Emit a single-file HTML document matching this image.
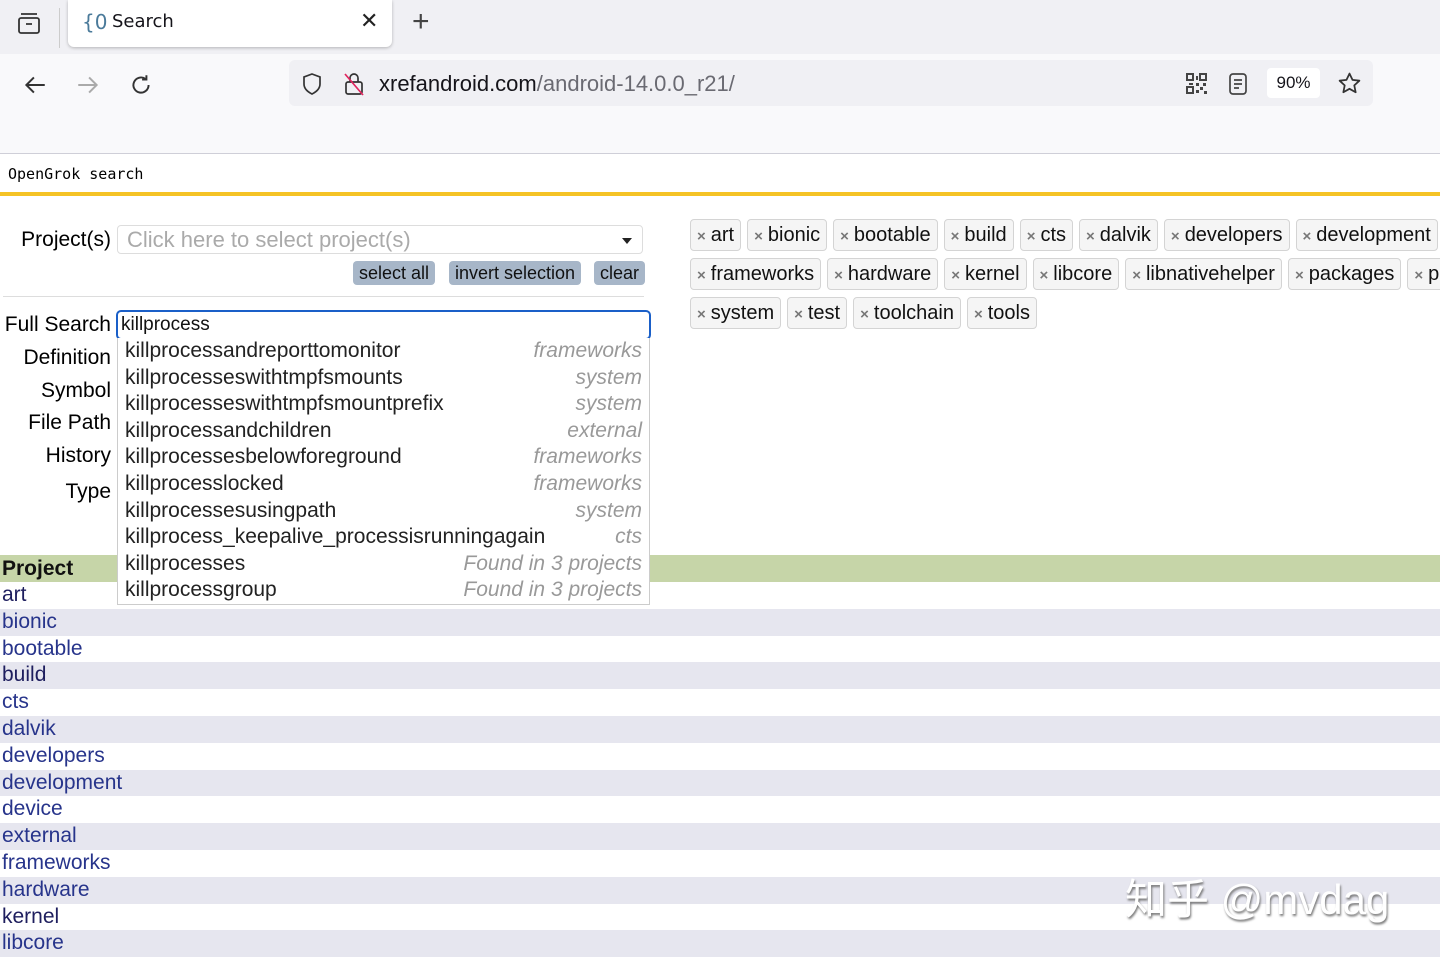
<!DOCTYPE html>
<html><head><meta charset="utf-8"><style>
*{margin:0;padding:0;box-sizing:border-box}
body{width:1440px;height:959px;overflow:hidden;background:#fff;font-family:"Liberation Sans",Arial,sans-serif;position:relative}
.a{position:absolute}
.tabbar{left:0;top:0;width:1440px;height:54px;background:#f0f0f4}
.tab{left:68px;top:0;width:324px;height:47px;background:#fff;border-radius:0 0 6px 6px;box-shadow:0 1px 3px rgba(0,0,0,.25)}
.toolbar{left:0;top:54px;width:1440px;height:100px;background:#f9f9fb;border-bottom:1px solid #cfcfd8}
.url{left:289px;top:60px;width:1084px;height:46px;background:#f0f0f4;border-radius:6px}
.lbl{font-size:21px;color:#000;text-align:right;width:111px;left:0;white-space:nowrap}
.btn{background:#a7b6c8;border-radius:4px;font-size:18px;height:24px;line-height:24px;padding:0 6px;top:261px;color:#111}
.tags{left:690px;width:750px;overflow:hidden;display:flex;gap:6px;flex-wrap:nowrap}
.tag{height:32px;border:1px solid #d4d4d4;border-radius:4px;background:#f5f5f5;font-size:20px;line-height:30px;padding:0 6px;color:#111;white-space:nowrap;flex:none}
.tag b{font-weight:bold;color:#777;font-size:15px;margin-right:5px}
.dd{left:117px;top:338px;width:533px;height:267px;background:#fff;border:1px solid #ccc;border-top:none}
.dd div{height:26.6px;line-height:26.6px;font-size:21px;padding:0 7px;display:flex;justify-content:space-between;color:#222;white-space:nowrap}
.dd i{color:#999}
.row{left:0;width:1440px;height:26.8px;font-size:21px;line-height:26.8px;padding-left:2px;color:#27348b}
.sh{background:#e6e6ef}
</style></head><body>
<div class="a tabbar"></div>
<svg class="a" style="left:17px;top:11px" width="24" height="24" viewBox="0 0 24 24" fill="none" stroke="#333" stroke-width="1.8"><rect x="2" y="7" width="20" height="15" rx="2"/><path d="M4 3h16M9 13h6"/></svg>
<div class="a" style="left:59px;top:8px;width:1px;height:40px;background:#ccc"></div>
<div class="a tab"></div>
<div class="a" style="left:82px;top:10px;font-size:20px;color:#4a7a9a;font-family:'DejaVu Sans',sans-serif">{0</div>
<div class="a" style="left:112px;top:11px;font-size:18px;color:#15141a;font-family:'DejaVu Sans',sans-serif">Search</div>
<div class="a" style="left:360px;top:8px;font-size:22px;color:#222">✕</div>
<div class="a" style="left:412px;top:5px;font-size:30px;color:#444;font-weight:200">+</div>
<div class="a toolbar"></div>
<svg class="a" style="left:22px;top:72px" width="26" height="26" viewBox="0 0 24 24" fill="none" stroke="#333" stroke-width="1.8"><path d="M21 12H4M11 5l-7 7 7 7"/></svg>
<svg class="a" style="left:75px;top:72px" width="26" height="26" viewBox="0 0 24 24" fill="none" stroke="#aaa" stroke-width="1.8"><path d="M3 12h17M13 5l7 7-7 7"/></svg>
<svg class="a" style="left:128px;top:72px" width="26" height="26" viewBox="0 0 24 24" fill="none" stroke="#333" stroke-width="1.8"><path d="M19 12a7 7 0 1 1-3-5.7"/><path d="M17 3v4h-4"/></svg>
<div class="a url"></div>
<svg class="a" style="left:300px;top:72px" width="24" height="24" viewBox="0 0 24 24" fill="none" stroke="#333" stroke-width="1.7"><path d="M12 2l8 3v7c0 5-4 8-8 10-4-2-8-5-8-10V5z"/></svg>
<svg class="a" style="left:342px;top:71px" width="24" height="26" viewBox="0 0 24 26" fill="none" stroke="#333" stroke-width="1.7"><rect x="4" y="11" width="16" height="12" rx="2"/><path d="M8 11V7a4 4 0 0 1 8 0v4"/><path d="M3 3l18 21" stroke="#e0245e"/></svg>
<div class="a" style="left:379px;top:71px;font-size:22px;color:#15141a">xrefandroid.com<span style="color:#6a6a72">/android-14.0.0_r21/</span></div>
<svg class="a" style="left:1186px;top:73px" width="21" height="21" viewBox="0 0 21 21" fill="#444"><rect x="0" y="0" width="8" height="8"/><rect x="13" y="0" width="8" height="8"/><rect x="0" y="13" width="8" height="8"/><rect x="2" y="2" width="4" height="4" fill="#f0f0f4"/><rect x="15" y="2" width="4" height="4" fill="#f0f0f4"/><rect x="2" y="15" width="4" height="4" fill="#f0f0f4"/><rect x="10" y="10" width="3" height="3"/><rect x="14" y="14" width="3" height="3"/><rect x="18" y="18" width="3" height="3"/><rect x="10" y="17" width="3" height="3"/><rect x="17" y="10" width="3" height="3"/><rect x="10" y="3" width="2" height="4"/><rect x="3" y="10" width="4" height="2"/></svg>
<svg class="a" style="left:1228px;top:72px" width="20" height="24" viewBox="0 0 20 24" fill="none" stroke="#444" stroke-width="1.7"><rect x="2" y="2" width="16" height="20" rx="3"/><path d="M6 8h8M6 12h8M6 16h5"/></svg>
<div class="a" style="left:1267px;top:68px;width:53px;height:30px;background:#fff;border-radius:4px;font-size:17px;line-height:30px;text-align:center;color:#15141a">90%</div>
<svg class="a" style="left:1337px;top:71px" width="25" height="25" viewBox="0 0 24 24" fill="none" stroke="#333" stroke-width="1.7" stroke-linejoin="round"><path d="M12 2.5l2.9 6 6.6.8-4.9 4.5 1.3 6.6L12 17.1l-5.9 3.3 1.3-6.6L2.5 9.3l6.6-.8z"/></svg>

<div class="a" style="left:8px;top:165px;font-family:'DejaVu Sans Mono','Liberation Mono',monospace;font-size:15px;color:#000">OpenGrok search</div>
<div class="a" style="left:0;top:192px;width:1440px;height:4px;background:#f5c325"></div>

<div class="a lbl" style="top:228px">Project(s)</div>
<div class="a" style="left:117px;top:225px;width:526px;height:29px;border:1px solid #ddd;border-radius:4px;font-size:22px;line-height:28px;padding-left:9px;color:#aaa">Click here to select project(s)</div>
<div class="a" style="left:622px;top:238px;border-left:5px solid transparent;border-right:5px solid transparent;border-top:6px solid #222"></div>
<div class="a btn" style="left:353px">select all</div>
<div class="a btn" style="left:449px">invert selection</div>
<div class="a btn" style="left:594px">clear</div>
<div class="a" style="left:3px;top:296px;width:641px;height:1px;background:#ddd"></div>

<div class="a lbl" style="top:313px">Full Search</div>
<div class="a" style="left:116px;top:310px;width:535px;height:30px;border:2px solid #1a5fc8;border-radius:5px;font-size:19px;line-height:26px;padding-left:3px;color:#111">killprocess</div>
<div class="a lbl" style="top:346px">Definition</div>
<div class="a lbl" style="top:379px">Symbol</div>
<div class="a lbl" style="top:411px">File Path</div>
<div class="a lbl" style="top:444px">History</div>
<div class="a lbl" style="top:480px">Type</div>

<div class="a tags" style="top:219px">
<span class="tag"><b>×</b>art</span><span class="tag"><b>×</b>bionic</span><span class="tag"><b>×</b>bootable</span><span class="tag"><b>×</b>build</span><span class="tag"><b>×</b>cts</span><span class="tag"><b>×</b>dalvik</span><span class="tag"><b>×</b>developers</span><span class="tag"><b>×</b>development</span></div>
<div class="a tags" style="top:258px">
<span class="tag"><b>×</b>frameworks</span><span class="tag"><b>×</b>hardware</span><span class="tag"><b>×</b>kernel</span><span class="tag"><b>×</b>libcore</span><span class="tag"><b>×</b>libnativehelper</span><span class="tag"><b>×</b>packages</span><span class="tag"><b>×</b>platform</span></div>
<div class="a tags" style="top:297px">
<span class="tag"><b>×</b>system</span><span class="tag"><b>×</b>test</span><span class="tag"><b>×</b>toolchain</span><span class="tag"><b>×</b>tools</span></div>

<div class="a" style="left:0;top:555px;width:1440px;height:27px;background:#c6d5a8;font-size:21px;font-weight:bold;line-height:27px;padding-left:2px;color:#111">Project</div>
<div class="a row" style="top:582px;color:#1e1e5e">art</div>
<div class="a row sh" style="top:608.8px">bionic</div>
<div class="a row" style="top:635.6px">bootable</div>
<div class="a row sh" style="top:662.4px;color:#1e1e5e">build</div>
<div class="a row" style="top:689.2px">cts</div>
<div class="a row sh" style="top:716px">dalvik</div>
<div class="a row" style="top:742.8px">developers</div>
<div class="a row sh" style="top:769.6px">development</div>
<div class="a row" style="top:796.4px">device</div>
<div class="a row sh" style="top:823.2px">external</div>
<div class="a row" style="top:850px">frameworks</div>
<div class="a row sh" style="top:876.8px">hardware</div>
<div class="a row" style="top:903.6px;color:#1e1e5e">kernel</div>
<div class="a row sh" style="top:930.4px">libcore</div>

<div class="a dd">
<div>killprocessandreporttomonitor<i>frameworks</i></div>
<div>killprocesseswithtmpfsmounts<i>system</i></div>
<div>killprocesseswithtmpfsmountprefix<i>system</i></div>
<div>killprocessandchildren<i>external</i></div>
<div>killprocessesbelowforeground<i>frameworks</i></div>
<div>killprocesslocked<i>frameworks</i></div>
<div>killprocessesusingpath<i>system</i></div>
<div>killprocess_keepalive_processisrunningagain<i>cts</i></div>
<div>killprocesses<i>Found in 3 projects</i></div>
<div>killprocessgroup<i>Found in 3 projects</i></div>
</div>

<div class="a" style="left:1125px;top:866px;font-size:42px;color:#fff;text-shadow:1px 2px 2px #777;font-family:'Liberation Sans','Noto Sans CJK SC',sans-serif">知乎 @mvdag</div>
</body></html>
